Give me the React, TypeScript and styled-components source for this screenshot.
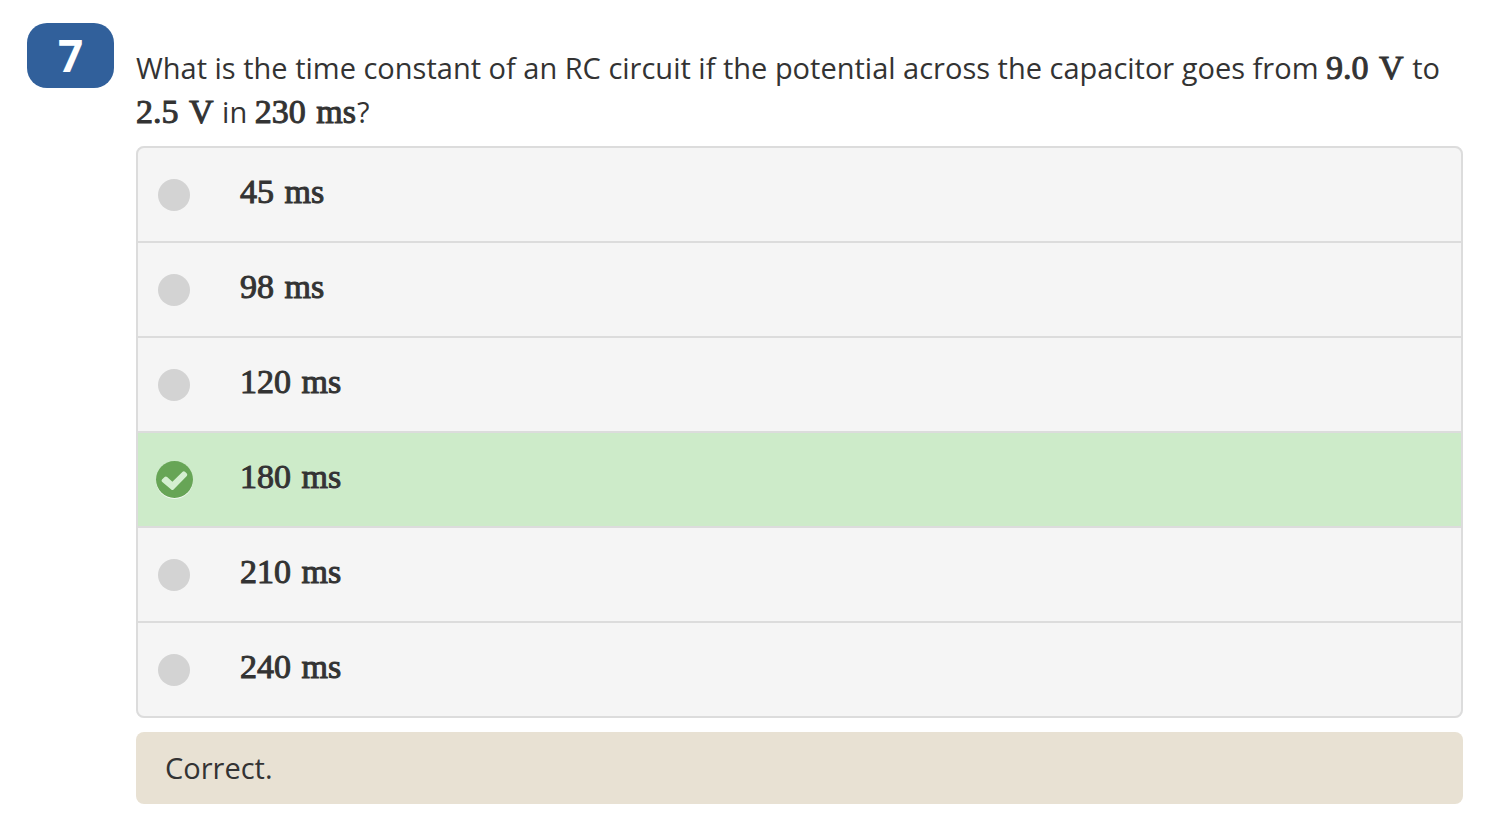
import React, { useState } from "react";
import styled, { createGlobalStyle, css } from "styled-components";

const GlobalStyle = createGlobalStyle`
  *, *::before, *::after { box-sizing: border-box; }
  body {
    margin: 0;
    background: #fff;
    color: #333;
    font-family: "Open Sans", "Noto Sans", sans-serif;
    font-size: 29px;
    line-height: 44px;
  }
`;

const Page = styled.main`
  display: flex;
  align-items: flex-start;
  gap: 22px;
  padding: 23px 25px 16px 27px;
`;

const QuestionNumber = styled.h2`
  flex: none;
  display: flex;
  align-items: center;
  justify-content: center;
  width: 87px;
  height: 65px;
  margin: 0;
  padding-bottom: 2px;
  border-radius: 20px;
  background: #31609b;
  color: #fff;
  font-size: 44px;
  font-weight: 700;
`;

const Content = styled.form`
  flex: 1;
  min-width: 0;
  padding-top: 23px;
`;

const Prompt = styled.p`
  margin: 0 0 12px;
`;

const QuantityText = styled.span`
  font-family: "Liberation Serif", "Times New Roman", serif;
  font-size: 34px;
  line-height: 34px;
  white-space: nowrap;
  -webkit-text-stroke: 1px currentColor;
`;

const Unit = styled.span`
  margin: 0 1px 0 2px;
`;

const Options = styled.fieldset`
  min-width: 0;
  margin: 0;
  padding: 0;
  border: 2px solid #dcdcdc;
  border-radius: 8px;
  background: #f5f5f5;
  overflow: hidden;
`;

const Option = styled.label<{ $correct: boolean }>`
  display: grid;
  grid-template-columns: 72px 1fr;
  align-items: center;
  column-gap: 30px;
  height: 93px;
  cursor: pointer;
  ${({ $correct }) =>
    $correct &&
    css`
      background: #cdebc9;
      text-shadow: 0 1px 0 #fff;
    `}
`;

const OptionSlot = styled.div`
  & + & {
    border-top: 2px solid #dcdcdc;
  }
`;

const OptionText = styled.span`
  padding-bottom: 6px;
`;

const Marker = styled.span`
  display: grid;
  place-items: center;

  > * {
    grid-area: 1 / 1;
  }
`;

const Radio = styled.input`
  appearance: none;
  width: 32px;
  height: 32px;
  margin: 0;
  border-radius: 50%;
  background: #d3d3d3;
`;

const CheckIcon = styled.svg`
  width: 38px;
  height: 40px;
  pointer-events: none;
`;

const Feedback = styled.div`
  margin-top: 14px;
  padding: 14px 29px;
  border-radius: 8px;
  background: #e8e1d3;
`;

const answers = [45, 98, 120, 180, 210, 240];
const correctAnswer = 180;

const Quantity = ({ value, unit }: { value: string; unit: string }) => (
  <QuantityText>
    {value} <Unit>{unit}</Unit>
  </QuantityText>
);

const CorrectMark = () => (
  <CheckIcon viewBox="0 0 38 40" aria-hidden="true">
    <circle cx="19.5" cy="20.5" r="18.5" fill="#f3faf2" />
    <circle cx="19.5" cy="19.5" r="18.5" fill="#67a556" />
    <path
      d="M7 19.4 L9.6 16.9 Q10.9 15.9 12.1 17 L17.4 21.8 L27.6 11.7 Q28.8 10.7 30 11.7 L31.8 13.5 Q32.8 14.7 31.8 15.9 L18.6 29.4 Q17.4 30.5 16.2 29.4 L7 21.8 Q6 20.6 7 19.4 Z"
      fill="#d5efd1"
    />
  </CheckIcon>
);

export default function App() {
  const [selected, setSelected] = useState(correctAnswer);
  return (
    <>
      <GlobalStyle />
      <Page>
        <QuestionNumber>7</QuestionNumber>
        <Content>
          <Prompt id="prompt">
            What is the time constant of an RC circuit if the potential across the
            capacitor goes from <Quantity value="9.0" unit="V" /> to{" "}
            <Quantity value="2.5" unit="V" /> in <Quantity value="230" unit="ms" />?
          </Prompt>
          <Options aria-labelledby="prompt">
            {answers.map((answer) => {
              const correct = answer === selected && answer === correctAnswer;
              return (
                <OptionSlot key={answer}>
                  <Option $correct={correct}>
                    <Marker>
                      <Radio
                        type="radio"
                        name="answer"
                        value={answer}
                        checked={answer === selected}
                        onChange={() => setSelected(answer)}
                      />
                      {correct && <CorrectMark />}
                    </Marker>
                    <OptionText>
                      <Quantity value={String(answer)} unit="ms" />
                    </OptionText>
                  </Option>
                </OptionSlot>
              );
            })}
          </Options>
          {selected === correctAnswer && <Feedback role="status">Correct.</Feedback>}
        </Content>
      </Page>
    </>
  );
}
